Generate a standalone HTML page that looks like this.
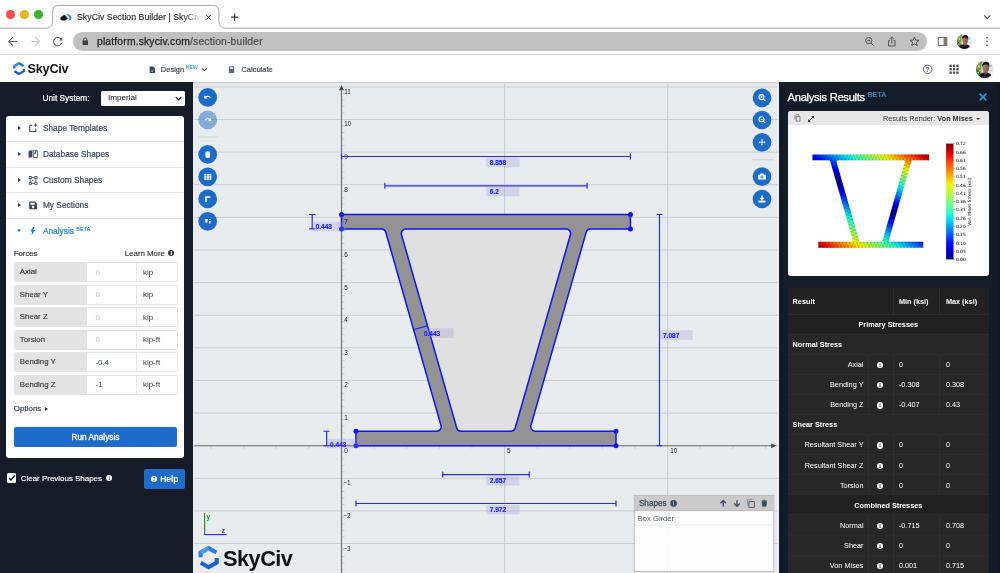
<!DOCTYPE html>
<html lang="en"><head><meta charset="utf-8"><title>SkyCiv Section Builder | SkyCiv</title>
<style>
*{box-sizing:border-box;margin:0;padding:0}
html,body{width:1000px;height:573px;overflow:hidden;background:#fff;font-family:"Liberation Sans",sans-serif;color:#333}
.abs{position:absolute}
#chrome,#apphdr,#side,#right,#cv{will-change:transform}
#chrome{position:absolute;left:0;top:0;width:1000px;height:55px;background:#fff}
#apphdr{position:absolute;left:0;top:55px;width:1000px;height:28px;background:#fff}
#side{position:absolute;left:0;top:83px;width:193px;height:490px;background:#151b28}
#cv{position:absolute;left:193px;top:83px;width:586px;height:490px;background:#e9ecef}
#right{position:absolute;left:779px;top:83px;width:221px;height:490px;background:#151b28}
/* chrome */
.tl{position:absolute;top:10.3px;width:8.6px;height:8.6px;border-radius:50%}
#omni{position:absolute;left:73px;top:32px;width:854px;height:19px;border-radius:9.5px;background:#c1c1c1}
#url{position:absolute;left:97px;top:35.5px;font-size:10.3px;line-height:12px;color:#4a4a4a;white-space:nowrap;letter-spacing:0.18px;-webkit-text-stroke:0.2px #4a4a4a}
#url b{font-weight:normal;color:#1c1c1c;-webkit-text-stroke:0.25px #1c1c1c}
#tabtitle{position:absolute;left:77px;top:11.3px;width:124.5px;overflow:hidden;white-space:nowrap;font-size:8.8px;line-height:12px;color:#2b2b2b;-webkit-text-stroke:0.15px #2b2b2b;-webkit-mask-image:linear-gradient(90deg,#000 85%,transparent 100%);mask-image:linear-gradient(90deg,#000 85%,transparent 100%)}
/* header */
.hnav{position:absolute;top:8.7px;font-size:7.5px;line-height:12px;color:#3f4a59;white-space:nowrap;-webkit-text-stroke:0.2px #3f4a59}
/* sidebar */
#unitlbl{position:absolute;left:42.5px;top:9px;font-size:8.3px;line-height:12px;color:#fff;white-space:nowrap;-webkit-text-stroke:0.2px #fff}
#unitsel{position:absolute;left:101px;top:8px;width:83.5px;height:14.5px;background:#fff;border-radius:1.5px;font-size:8.1px;line-height:14.5px;color:#000;padding-left:7px}
#card{position:absolute;left:6px;top:33px;width:178px;height:342px;background:#fff;border-radius:3px}
.mrow{position:absolute;left:-1px;width:178px;height:25.5px;border-top:1px solid #e4e6e9;font-size:8.35px;-webkit-text-stroke:0.2px;line-height:12px;color:#3d4a59;white-space:nowrap}
.mrow .tx{position:absolute;left:36.9px;top:5.9px}
.mrow svg{left:1px !important}
.mrow .car{position:absolute;left:11.7px;top:10px;width:0;height:0;border-left:3px solid #2f3a47;border-top:2.4px solid transparent;border-bottom:2.4px solid transparent}
.frow{position:absolute;left:7px;width:163.5px;height:20px;border:1px solid #e3e6e9;border-radius:2px;font-size:7.85px;line-height:12px;color:#333;overflow:hidden;background:#fff}
.frow .l{position:absolute;left:0;top:0;width:72.3px;height:20px;background:#e3e3e3;padding:3.2px 0 0 4.8px;color:#3a3a3a;-webkit-text-stroke:0.15px}
.frow .i{position:absolute;left:72.3px;top:0;width:49.5px;height:20px;padding:3.5px 0 0 8.1px;border-right:1px solid #e3e6e9;color:#b9bec4;font-size:7.9px}
.frow .i.v{color:#3a4450}
.frow .u{position:absolute;left:121.8px;top:0;padding:3.4px 0 0 6.3px;color:#333}
sup.b{-webkit-text-stroke:0.2px #2a9bd7;font-size:5.4px;vertical-align:baseline;position:relative;top:-3.2px;color:#2a9bd7;letter-spacing:.1px}
/* right */
#rt{position:absolute;left:8.6px;top:7.4px;font-size:11.2px;line-height:14px;color:#fff;white-space:nowrap;letter-spacing:-0.3px;-webkit-text-stroke:0.25px #fff}
#rcard{position:absolute;left:9px;top:28px;width:200.5px;height:164.6px;background:#fff;border-radius:3px;overflow:hidden}
#rhead{position:absolute;left:0;top:0;width:100%;height:14px;background:#e7e7e7}
table{position:absolute;left:9px;top:205px;width:200.6px;border-collapse:collapse;font-size:7.3px;color:#fff;table-layout:fixed}
td,th{height:20.08px;padding:0.5px 4.6px 0;border-top:1px solid #2c2c2c;text-align:left;white-space:nowrap;font-weight:normal;background:#272727;vertical-align:middle}
th{height:26.2px;font-weight:bold;background:#222;border-top:none}
td.c{text-align:center;font-weight:bold;background:#212121}
td.s{font-weight:bold}
td.r{text-align:right}
td.bl,th.bl{border-left:1px solid #2e2e2e}
td.ic{text-align:center;padding:0.6px 2px 0 0}
td.mn,th.mn{padding-left:5.2px}
td.mx,th.mx{padding-left:6.1px}
.inf{display:inline-block;width:6.2px;height:6.2px;border-radius:50%;background:#fff;color:#222;font-size:5.4px;line-height:6.4px;font-weight:bold;text-align:center;font-family:"Liberation Serif",serif;vertical-align:middle}
</style></head><body>
<div id="chrome">
<svg class="abs" style="left:0;top:0" width="1000" height="55" viewBox="0 0 1000 55">
<path d="M0 28.2 L45 28.2 Q52.6 28.2 52.6 21.5 L52.6 11.5 Q52.6 5.4 59 5.4 L212.5 5.4 Q218.9 5.4 218.9 11.5 L218.9 21.5 Q218.9 28.2 226.5 28.2 L1000 28.2" fill="none" stroke="#9c9c9c" stroke-width="0.9"/>
<line x1="0" y1="54.5" x2="1000" y2="54.5" stroke="#d6d6d6" stroke-width="1"/>
<!-- favicon -->
<g>
<path d="M60.4 18.6 C60.4 16.9 61.7 16.1 62.7 16.3 C63.1 14.9 64.7 14.5 65.4 15.6 L67.9 18.4 C66.6 19 66.2 20.6 64.2 20.6 L62.1 20.6 C61.1 20.6 60.4 19.7 60.4 18.6 Z" fill="#17181b"/>
<path d="M66.3 14.5 C68.5 13.9 70.6 14.8 71.4 17 C72 18.9 70.7 20.4 68.5 20.8 C69.6 19.4 69.8 18.1 68.9 16.8 C68.3 15.8 67.4 15 66.3 14.5 Z" fill="#2585cc"/>
</g>
<!-- close x -->
<path d="M206.1 14.9 L210.9 19.7 M210.9 14.9 L206.1 19.7" stroke="#333" stroke-width="1" fill="none"/>
<!-- plus -->
<path d="M231 17.1 L238.2 17.1 M234.6 13.5 L234.6 20.7" stroke="#333" stroke-width="1.1" fill="none"/>
<!-- chevron right top -->
<path d="M984.2 15.3 L987.2 18.6 L990.2 15.3" stroke="#444" stroke-width="1.1" fill="none"/>
<!-- back -->
<path d="M17.2 41.4 L8.8 41.4 M12.9 37.2 L8.7 41.4 L12.9 45.6" stroke="#5c5c5c" stroke-width="1.05" fill="none"/>
<!-- forward -->
<path d="M31 41.4 L39.4 41.4 M35.3 37.2 L39.5 41.4 L35.3 45.6" stroke="#c6c6c6" stroke-width="1.05" fill="none"/>
<!-- reload -->
<path d="M61.2 39.6 A4.1 4.1 0 1 0 61.6 42.8" stroke="#5c5c5c" stroke-width="1.05" fill="none"/>
<path d="M62.3 37.2 L62.3 40.6 L58.9 40.6 Z" fill="#5c5c5c"/>
</svg>
<div class="tl" style="left:6.4px;background:#fc4a48"></div>
<div class="tl" style="left:20.4px;background:#e9b220"></div>
<div class="tl" style="left:34.2px;background:#38b62b"></div>
<div id="tabtitle">SkyCiv Section Builder | SkyCiv Platform</div>
<div id="omni"></div>
<svg class="abs" style="left:0;top:28px" width="1000" height="27" viewBox="0 28 1000 27">
<!-- lock -->
<rect x="82.6" y="40.6" width="5.4" height="4.4" rx="0.6" fill="#3c3c3c"/>
<path d="M83.7 40.8 L83.7 39.6 A1.6 1.6 0 0 1 86.9 39.6 L86.9 40.8" stroke="#3c3c3c" stroke-width="0.9" fill="none"/>
<!-- zoom out -->
<circle cx="868.8" cy="40.6" r="3.1" stroke="#4a4a4a" stroke-width="0.9" fill="none"/>
<path d="M871 43 L873.8 45.8 M867.3 40.6 L870.3 40.6" stroke="#4a4a4a" stroke-width="0.9" fill="none"/>
<!-- share -->
<path d="M889.9 40.3 L888.6 40.3 L888.6 46 L895 46 L895 40.3 L893.7 40.3 M891.8 43.4 L891.8 37.2 M889.9 38.8 L891.8 36.9 L893.7 38.8" stroke="#4a4a4a" stroke-width="0.9" fill="none"/>
<!-- star -->
<path d="M914.5 37 L915.7 40.1 L919 40.3 L916.4 42.4 L917.3 45.6 L914.5 43.8 L911.7 45.6 L912.6 42.4 L910 40.3 L913.3 40.1 Z" stroke="#4a4a4a" stroke-width="0.9" fill="none" stroke-linejoin="round"/>
<!-- side panel -->
<rect x="938.2" y="37.4" width="8.6" height="8" stroke="#5a5a5a" stroke-width="0.9" fill="none"/>
<rect x="943.6" y="37.4" width="3.2" height="8" fill="#7a7a7a"/>
<!-- dots -->
<circle cx="987" cy="37.6" r="0.85" fill="#555"/><circle cx="987" cy="41.4" r="0.85" fill="#555"/><circle cx="987" cy="45.2" r="0.85" fill="#555"/>
<!-- avatar -->
<defs><clipPath id="av1"><circle cx="0" cy="0" r="10"/></clipPath></defs><g transform="translate(964.40 41.50) scale(0.760)"><g clip-path="url(#av1)"><rect x="-10" y="-10" width="20" height="20" fill="#e6ecf1"/><path d="M-10 -10 L-2 -10 C-4 -6 -4.5 0 -3 10 L-10 10 Z" fill="#7c9a52"/><path d="M-10 0 C-7 -1 -5 2 -4 10 L-10 10 Z" fill="#4f7032"/><circle cx="-6.8" cy="-3.2" r="1.1" fill="#e9e2a8"/><circle cx="-5.6" cy="1.6" r="0.9" fill="#d9c65e"/><circle cx="-7.6" cy="3.6" r="0.8" fill="#dfe6c8"/><circle cx="6.6" cy="-3.5" r="1.2" fill="#9fb9d8"/><circle cx="7.2" cy="1.5" r="1" fill="#b5c8de"/><path d="M-8 10 C-7 5 -3.5 3.6 0.6 3.6 C4.6 3.6 7.6 5.2 8.6 10 Z" fill="#17171d"/><path d="M-1.4 1.5 L3 1.5 L3.2 4.4 C1.6 5.6 0 5.6 -1.4 4.4 Z" fill="#7b5946"/><ellipse cx="0.9" cy="-1.6" rx="3.7" ry="4.7" fill="#9e7761"/><path d="M0.9 -6.3 C3.4 -6.3 4.6 -4 4.6 -1.6 C4.6 1 3.2 3.1 0.9 3.1 Z" fill="#8a6552"/><path d="M-3.1 -2.2 C-4 -7.6 -0.5 -8.6 1.4 -8.6 C4.8 -8.6 5.8 -5.4 4.7 -1.9 C4.4 -4.3 3 -5.4 0.8 -5.3 C-1.4 -5.3 -2.7 -4.2 -3.1 -2.2 Z" fill="#18161a"/></g></g>
</svg>
<div id="url"><b>platform.skyciv.com</b>/section-builder</div>
</div>
<div class="abs" style="left:0;top:82px;width:1000px;height:1px;background:linear-gradient(90deg,#151b28 0,#151b28 193px,#cfd2d5 193px,#cfd2d5 779px,#151b28 779px);z-index:5"></div>
<div class="abs" style="left:193px;top:83px;width:586px;height:1px;background:#dde0e3;z-index:5"></div>
<div id="apphdr">
<svg class="abs" style="left:0;top:0" width="1000" height="28" viewBox="0 55 1000 28">
<!-- logo icon -->
<g fill="none" stroke-width="2.3" stroke-linejoin="miter">
<path d="M14.3 68.5 L14.3 66.1 L19 63.3 L23.6 66.0" stroke="#1c68de"/>
<path d="M14.3 66.1 L19 63.3" stroke="#3d8ff5"/>
<path d="M23.8 68.9 L23.8 71.2 L19 74 L14.4 71.3" stroke="#1757cf"/>
</g>
<!-- design icon -->
<path d="M149.6 66.4 L153.2 66.4 L155.1 68.3 L155.1 73 L149.6 73 Z" fill="#3d4856"/>
<path d="M151 70.6 L152 71.6 L153.8 69.6" stroke="#fff" stroke-width="0.7" fill="none"/>
<!-- chevron -->
<path d="M202 68.4 L204.4 70.6 L206.8 68.4" stroke="#3d4856" stroke-width="1.1" fill="none"/>
<!-- calc icon -->
<rect x="228.9" y="66.2" width="5.3" height="6.8" rx="0.7" fill="#5b6673"/>
<rect x="229.9" y="67.2" width="3.3" height="1.5" fill="#fff"/>
<!-- help -->
<circle cx="927.7" cy="69.3" r="4.2" stroke="#4a5868" stroke-width="0.9" fill="none"/>
<!-- grid -->
<g fill="#4a4a4a">
<rect x="949.5" y="64.7" width="2.3" height="2.3"/><rect x="952.9" y="64.7" width="2.3" height="2.3"/><rect x="956.3" y="64.7" width="2.3" height="2.3"/>
<rect x="949.5" y="68.1" width="2.3" height="2.3"/><rect x="952.9" y="68.1" width="2.3" height="2.3"/><rect x="956.3" y="68.1" width="2.3" height="2.3"/>
<rect x="949.5" y="71.5" width="2.3" height="2.3"/><rect x="952.9" y="71.5" width="2.3" height="2.3"/><rect x="956.3" y="71.5" width="2.3" height="2.3"/>
</g>
<!-- avatar -->
<defs><clipPath id="av2"><circle cx="0" cy="0" r="10"/></clipPath></defs><g transform="translate(984.90 69.30) scale(0.890)"><g clip-path="url(#av2)"><rect x="-10" y="-10" width="20" height="20" fill="#e6ecf1"/><path d="M-10 -10 L-2 -10 C-4 -6 -4.5 0 -3 10 L-10 10 Z" fill="#7c9a52"/><path d="M-10 0 C-7 -1 -5 2 -4 10 L-10 10 Z" fill="#4f7032"/><circle cx="-6.8" cy="-3.2" r="1.1" fill="#e9e2a8"/><circle cx="-5.6" cy="1.6" r="0.9" fill="#d9c65e"/><circle cx="-7.6" cy="3.6" r="0.8" fill="#dfe6c8"/><circle cx="6.6" cy="-3.5" r="1.2" fill="#9fb9d8"/><circle cx="7.2" cy="1.5" r="1" fill="#b5c8de"/><path d="M-8 10 C-7 5 -3.5 3.6 0.6 3.6 C4.6 3.6 7.6 5.2 8.6 10 Z" fill="#17171d"/><path d="M-1.4 1.5 L3 1.5 L3.2 4.4 C1.6 5.6 0 5.6 -1.4 4.4 Z" fill="#7b5946"/><ellipse cx="0.9" cy="-1.6" rx="3.7" ry="4.7" fill="#9e7761"/><path d="M0.9 -6.3 C3.4 -6.3 4.6 -4 4.6 -1.6 C4.6 1 3.2 3.1 0.9 3.1 Z" fill="#8a6552"/><path d="M-3.1 -2.2 C-4 -7.6 -0.5 -8.6 1.4 -8.6 C4.8 -8.6 5.8 -5.4 4.7 -1.9 C4.4 -4.3 3 -5.4 0.8 -5.3 C-1.4 -5.3 -2.7 -4.2 -3.1 -2.2 Z" fill="#18161a"/></g></g>
</svg>
<div class="abs" style="left:27.6px;top:7.2px;font-size:12.7px;line-height:15px;font-weight:bold;color:#0e0e10;letter-spacing:-0.25px">SkyCiv</div>
<div class="hnav" style="left:160.8px">Design<sup class="b" style="font-size:5px;top:-3px;margin-left:1.6px;-webkit-text-stroke:0.1px #2a9bd7">NEW</sup></div>
<div class="hnav" style="left:241.4px">Calculate</div>
<div class="abs" style="left:925.6px;top:9.6px;font-size:6.6px;line-height:9px;font-weight:bold;color:#4a5868">?</div>
</div>
<!--SD--><div id="side">
<div id="unitlbl">Unit System:</div>
<div id="unitsel">Imperial<svg class="abs" style="right:2.8px;top:4.6px" width="7" height="6" viewBox="0 0 7 6"><path d="M0.8 1.2 L3.5 4 L6.2 1.2" stroke="#111" stroke-width="1.15" fill="none"/></svg></div>
<div id="card"><div class="abs" style="left:1px;top:0;width:177px;height:342px">
<div class="mrow" style="top:0px;border-top:none"><span class="car"></span><svg class="abs" style="left:0;top:0" width="40" height="25" viewBox="0 0 40 25"><path d="M25.3 9.2 H22.7 V15.4 H28.9 V12.6" stroke="#3d4a59" stroke-width="1.05" fill="none" stroke-linejoin="round"/><path d="M28.6 7.4 V11 M26.8 9.2 H30.4" stroke="#3d4a59" stroke-width="0.95" fill="none"/></svg><span class="tx">Shape Templates</span></div>
<div class="mrow" style="top:25.3px"><span class="car"></span><svg class="abs" style="left:0;top:0" width="40" height="25" viewBox="0 0 40 25"><path d="M21.6 8.8 L25.3 8.3 L25.3 15.2 L21.6 15.7 Z" fill="#3d4a59"/><path d="M26.3 8.5 L27.6 8.6 M29.6 8.9 L30.6 9 L30.6 15.7 L26.3 15.2 L26.3 8.4" stroke="#3d4a59" stroke-width="0.9" fill="none"/><path d="M29.2 7.6 L27.8 12.3" stroke="#3d4a59" stroke-width="1.3"/></svg><span class="tx">Database Shapes</span></div>
<div class="mrow" style="top:50.8px"><span class="car"></span><svg class="abs" style="left:0;top:0" width="40" height="25" viewBox="0 0 40 25"><path d="M23.3 9.6 H28.9 V15.4 H23.3 Z" stroke="#3d4a59" stroke-width="0.85" fill="none"/><g fill="#fff" stroke="#3d4a59" stroke-width="0.8"><rect x="22.2" y="8.5" width="2.1" height="2.1"/><rect x="27.9" y="8.5" width="2.1" height="2.1"/><rect x="22.2" y="14.4" width="2.1" height="2.1"/><rect x="27.9" y="14.4" width="2.1" height="2.1"/></g><path d="M24.6 13.4 Q26.1 10.4 27.6 13.4" stroke="#3d4a59" stroke-width="0.8" fill="none"/></svg><span class="tx">Custom Shapes</span></div>
<div class="mrow" style="top:76.3px"><span class="car"></span><svg class="abs" style="left:0;top:0" width="40" height="25" viewBox="0 0 40 25"><path d="M22.2 9.4 Q22.2 8.6 23 8.6 L28 8.6 L30.1 10.7 L30.1 15.5 Q30.1 16.3 29.3 16.3 L23 16.3 Q22.2 16.3 22.2 15.5 Z" fill="#3d4a59"/><rect x="23.5" y="9.8" width="4.2" height="2" fill="#fff"/><circle cx="26.1" cy="13.9" r="1.25" fill="#fff"/></svg><span class="tx">My Sections</span></div>
<div class="mrow" style="top:101.8px;color:#1b7fd0"><svg class="abs" style="left:0;top:0" width="40" height="25" viewBox="0 0 40 25"><path d="M9.9 10.6 H14.3 L12.1 13 Z" fill="#1b7fd0"/><path d="M26.2 7.8 L23.4 12.6 H25.3 L24.3 16.4 L28.4 10.9 H26.3 L27.6 7.8 Z" fill="#1b7fd0"/></svg><span class="tx">Analysis <sup class="b">BETA</sup></span></div>
<div class="abs" style="left:6.8px;top:131.7px;font-size:7.75px;line-height:12px;color:#333;-webkit-text-stroke:0.2px">Forces</div>
<div class="abs" style="left:117.8px;top:131.7px;font-size:7.85px;line-height:12px;color:#333;white-space:nowrap;-webkit-text-stroke:0.15px">Learn More <span class="inf" style="background:#333;color:#fff;position:relative;top:-0.6px;margin-left:1px">i</span></div>
<div class="frow" style="top:146.2px"><div class="l">Axial</div><div class="i">0</div><div class="u">kip</div></div>
<div class="frow" style="top:168.7px"><div class="l">Shear Y</div><div class="i">0</div><div class="u">kip</div></div>
<div class="frow" style="top:191.2px"><div class="l">Shear Z</div><div class="i">0</div><div class="u">kip</div></div>
<div class="frow" style="top:213.7px"><div class="l">Torsion</div><div class="i">0</div><div class="u">kip-ft</div></div>
<div class="frow" style="top:236.2px"><div class="l">Bending Y</div><div class="i v">-0.4</div><div class="u">kip-ft</div></div>
<div class="frow" style="top:258.7px"><div class="l">Bending Z</div><div class="i v">-1</div><div class="u">kip-ft</div></div>
<div class="abs" style="left:6.8px;top:287.2px;font-size:8px;line-height:12px;color:#333d4a;white-space:nowrap;-webkit-text-stroke:0.2px">Options <span style="display:inline-block;width:0;height:0;border-left:3.1px solid #333;border-top:2.7px solid transparent;border-bottom:2.7px solid transparent;position:relative;top:0px;margin-left:1.2px"></span></div>
<div class="abs" style="left:6.7px;top:311px;width:163.5px;height:20px;background:#1d6cc9;border-radius:2px;color:#fff;font-size:8.3px;line-height:20px;text-align:center;-webkit-text-stroke:0.3px #fff">Run Analysis</div>
</div></div>
<div class="abs" style="left:6.6px;top:390.3px;width:9.7px;height:9.7px;background:#fff;border-radius:1.5px"><svg class="abs" style="left:0;top:0" width="9.7" height="9.7" viewBox="0 0 9.7 9.7"><path d="M2 5 L4 7 L7.8 2.6" stroke="#111" stroke-width="1.5" fill="none"/></svg></div>
<div class="abs" style="left:20.8px;top:389.9px;font-size:7.95px;line-height:12px;color:#fff;white-space:nowrap;-webkit-text-stroke:0.15px #fff">Clear Previous Shapes <span class="inf" style="position:relative;top:-0.6px;margin-left:2px;color:#151b28">i</span></div>
<div class="abs" style="left:144px;top:386px;width:40.6px;height:19.8px;background:#1d6cc9;border-radius:2px;color:#fff;font-size:8.4px;line-height:21px;font-weight:bold;white-space:nowrap;padding-left:7px"><span class="inf" style="position:relative;top:-0.6px;margin-right:3px;color:#1d6cc9;font-family:'Liberation Sans',sans-serif;font-size:5px">?</span>Help</div>
</div><!--/SD-->
<!--CV--><svg id="cv" width="586" height="490" viewBox="193 83 586 490" font-family="Liberation Sans, sans-serif">
<rect x="193" y="83" width="586" height="490" fill="#e9ecef"/>
<path d="M193 543.56 H779 M193 510.94 H779 M193 478.32 H779 M193 445.70 H779 M193 413.08 H779 M193 380.46 H779 M193 347.84 H779 M193 315.22 H779 M193 282.60 H779 M193 249.98 H779 M193 217.36 H779 M193 184.74 H779 M193 152.12 H779 M193 119.50 H779 M193 86.88 H779 M504.60 83 V573 M667.70 83 V573" stroke="#cbcdcf" stroke-width="1" fill="none"/>
<path d="M341.50 569.66 h3.2 M341.50 563.13 h3.2 M341.50 556.61 h3.2 M341.50 550.08 h3.2 M341.50 537.04 h3.2 M341.50 530.51 h3.2 M341.50 523.99 h3.2 M341.50 517.46 h3.2 M341.50 504.42 h3.2 M341.50 497.89 h3.2 M341.50 491.37 h3.2 M341.50 484.84 h3.2 M341.50 471.80 h3.2 M341.50 465.27 h3.2 M341.50 458.75 h3.2 M341.50 452.22 h3.2 M341.50 439.18 h3.2 M341.50 432.65 h3.2 M341.50 426.13 h3.2 M341.50 419.60 h3.2 M341.50 406.56 h3.2 M341.50 400.03 h3.2 M341.50 393.51 h3.2 M341.50 386.98 h3.2 M341.50 373.94 h3.2 M341.50 367.41 h3.2 M341.50 360.89 h3.2 M341.50 354.36 h3.2 M341.50 341.32 h3.2 M341.50 334.79 h3.2 M341.50 328.27 h3.2 M341.50 321.74 h3.2 M341.50 308.70 h3.2 M341.50 302.17 h3.2 M341.50 295.65 h3.2 M341.50 289.12 h3.2 M341.50 276.08 h3.2 M341.50 269.55 h3.2 M341.50 263.03 h3.2 M341.50 256.50 h3.2 M341.50 243.46 h3.2 M341.50 236.93 h3.2 M341.50 230.41 h3.2 M341.50 223.88 h3.2 M341.50 210.84 h3.2 M341.50 204.31 h3.2 M341.50 197.79 h3.2 M341.50 191.26 h3.2 M341.50 178.22 h3.2 M341.50 171.69 h3.2 M341.50 165.17 h3.2 M341.50 158.64 h3.2 M341.50 145.60 h3.2 M341.50 139.07 h3.2 M341.50 132.55 h3.2 M341.50 126.02 h3.2 M341.50 112.98 h3.2 M341.50 106.45 h3.2 M341.50 99.93 h3.2 M341.50 93.40 h3.2 M211.02 445.70 v3.2 M243.64 445.70 v3.2 M276.26 445.70 v3.2 M308.88 445.70 v3.2 M374.12 445.70 v3.2 M406.74 445.70 v3.2 M439.36 445.70 v3.2 M471.98 445.70 v3.2 M537.22 445.70 v3.2 M569.84 445.70 v3.2 M602.46 445.70 v3.2 M635.08 445.70 v3.2 M700.32 445.70 v3.2 M732.94 445.70 v3.2 M765.56 445.70 v3.2" stroke="#c4c6c8" stroke-width="0.8" fill="none"/>
<path d="M341.50 573 V88 M193 445.70 H773" stroke="#727272" stroke-width="1.15" fill="none"/>
<path d="M341.50 85.3 l-2.55 5 h5.1 Z M776.4 445.70 l-5.2 -2.55 v5.1 Z" fill="#484848"/>
<path d="M341.50 214.52 L630.45 214.52 L630.45 228.97 L590.49 228.97 A4.50 4.50 0 0 0 586.16 232.24 L530.95 425.51 A4.50 4.50 0 0 0 535.28 431.25 L616.00 431.25 L616.00 445.70 L355.95 445.70 L355.95 431.25 L436.67 431.25 A4.50 4.50 0 0 0 441.00 425.51 L385.78 232.24 A4.50 4.50 0 0 0 381.46 228.97 L341.50 228.97 Z" fill="#939393" stroke="#1212ff" stroke-width="1.5" stroke-linejoin="round"/>
<path d="M401.52 234.71 A4.50 4.50 0 0 1 405.85 228.97 L566.10 228.97 A4.50 4.50 0 0 1 570.43 234.71 L515.21 427.99 A4.50 4.50 0 0 1 510.89 431.25 L461.06 431.25 A4.50 4.50 0 0 1 456.73 427.99 Z" fill="#e0e0e0" stroke="#1212ff" stroke-width="1.5" stroke-linejoin="round"/>
<g font-size="6.4" fill="#1a1a1a"><text x="343.4" y="550.5">−3</text><text x="343.4" y="517.8">−2</text><text x="343.4" y="485.2">−1</text><text x="344.2" y="420.0">1</text><text x="344.2" y="387.4">2</text><text x="344.2" y="354.7">3</text><text x="344.2" y="322.1">4</text><text x="344.2" y="289.5">5</text><text x="344.2" y="256.9">6</text><text x="344.2" y="224.3">7</text><text x="344.2" y="191.6">8</text><text x="344.2" y="159.0">9</text><text x="344.2" y="126.4">10</text><text x="344.2" y="93.8">11</text><text x="344.2" y="452.6">0</text><text x="507.1" y="452.6">5</text><text x="670.2" y="452.6">10</text></g>
<g fill="#1414ff"><circle cx="341.50" cy="214.52" r="2.5"/><circle cx="341.50" cy="228.97" r="2.5"/><circle cx="630.45" cy="214.52" r="2.5"/><circle cx="630.45" cy="228.97" r="2.5"/><circle cx="355.95" cy="431.25" r="2.5"/><circle cx="355.95" cy="445.70" r="2.5"/><circle cx="616.00" cy="431.25" r="2.5"/><circle cx="616.00" cy="445.70" r="2.5"/></g>
<path d="M341.50 156.50 H630.45 M341.50 153.50 v6 M630.45 153.50 v6 M384.85 185.80 H587.10 M384.85 182.80 v6 M587.10 182.80 v6 M442.64 474.60 H529.31 M442.64 471.60 v6 M529.31 471.60 v6 M355.95 503.50 H616.00 M355.95 500.50 v6 M616.00 500.50 v6 M659.50 214.52 V445.70 M656.60 214.52 h5.8 M656.60 445.70 h5.8 M312.20 214.52 V228.97 M309.10 214.52 h6.2 M309.10 228.97 h6.2 M326.60 431.25 V445.70 M323.50 431.25 h6.2 M323.50 445.70 h6.2 M414.4 329.4 L427.3 325.9" stroke="#2a2aff" stroke-width="1.2" fill="none"/>
<g fill="#8c8cd8" fill-opacity="0.25"><rect x="486.3" y="157.6" width="33.2" height="9.6"/><rect x="486.3" y="186.7" width="33.2" height="9.6"/><rect x="486.3" y="475.9" width="33.2" height="9.6"/><rect x="486.3" y="504.9" width="33.2" height="9.6"/><rect x="659.5" y="330.2" width="33.2" height="9.6"/><rect x="312.2" y="221.6" width="33.2" height="9.6"/><rect x="326.6" y="438.8" width="33.2" height="9.6"/><rect x="420.4" y="328.3" width="33.2" height="9.6"/></g>
<g font-size="6.5" font-weight="bold" fill="#1c1cff" stroke="#1c1cff" stroke-width="0.15"><text x="489.8" y="164.9">8.858</text><text x="489.8" y="194.0">6.2</text><text x="489.8" y="483.2">2.657</text><text x="489.8" y="512.2">7.972</text><text x="663.0" y="337.5">7.087</text><text x="315.7" y="229.4">0.443</text><text x="330.1" y="446.6">0.443</text><text x="423.9" y="336.1">0.443</text></g>
<path d="M204.6 513 V535" stroke="#1e8a1e" stroke-width="1.1"/><path d="M204.1 534.6 H226.6" stroke="#2222ff" stroke-width="1.1"/>
<text x="206.6" y="519.4" font-size="6.4" font-weight="bold" fill="#1e8a1e">y</text><text x="221.8" y="532.6" font-size="6.4" font-weight="bold" fill="#2222ff">z</text>
<g fill="none" stroke-width="4.1"><path d="M200.6 557.3 L200.6 552.6 L208.6 548.1 L216.4 552.5" stroke="#2a7be4"/><path d="M200.6 552.6 L208.6 548.1" stroke="#4a9af5"/><path d="M216.7 558 L216.7 562.6 L208.6 567.2 L200.8 562.8" stroke="#1d63d4"/></g>
<text x="223" y="565.6" font-size="21.8" font-weight="bold" fill="#121214" letter-spacing="-0.55">SkyCiv</text>
<rect x="778" y="83" width="1" height="490" fill="#f5f6f7"/><rect x="193" y="83" width="1" height="490" fill="#eef0f2"/>
<circle cx="207.7" cy="97.4" r="9.35" fill="#1d6cc9" fill-opacity="1"/><circle cx="207.7" cy="119.9" r="9.35" fill="#1d6cc9" fill-opacity="0.5"/><circle cx="207.7" cy="154.4" r="9.35" fill="#1d6cc9" fill-opacity="1"/><circle cx="207.7" cy="176.8" r="9.35" fill="#1d6cc9" fill-opacity="1"/><circle cx="207.7" cy="198.9" r="9.35" fill="#1d6cc9" fill-opacity="1"/><circle cx="207.7" cy="221.3" r="9.35" fill="#1d6cc9" fill-opacity="1"/><circle cx="762.0" cy="97.8" r="9.35" fill="#1d6cc9" fill-opacity="1"/><circle cx="762.0" cy="120.0" r="9.35" fill="#1d6cc9" fill-opacity="1"/><circle cx="762.0" cy="142.3" r="9.35" fill="#1d6cc9" fill-opacity="1"/><circle cx="762.0" cy="176.6" r="9.35" fill="#1d6cc9" fill-opacity="1"/><circle cx="762.0" cy="199.0" r="9.35" fill="#1d6cc9" fill-opacity="1"/><path d="M197.9 137 H218.5 M751.8 159.8 H773" stroke="#cfd1d3" stroke-width="1"/><path d="M205.3 97.2 C206.6 95.8 209 95.9 210.2 97.6" stroke="#fff" fill="none" stroke-width="1.2"/><path d="M204.3 95.3 L204.3 98.4 L207.4 98.4 Z" fill="#fff"/><path d="M210.1 119.7 C208.8 118.3 206.4 118.4 205.2 120.1" stroke="#fff" fill="none" stroke-width="1.2"/><path d="M211.1 117.8 L211.1 120.9 L208 120.9 Z" fill="#fff"/><path d="M205.7 152.9 H209.7 L209.4 157.4 H206 Z M205.4 152.2 H210 M206.9 151.6 H208.5" stroke="#fff" stroke-width="0.8" fill="#fff"/><g fill="#fff"><rect x="204.20" y="173.90" width="2.1" height="1.7"/><rect x="206.75" y="173.90" width="2.1" height="1.7"/><rect x="209.30" y="173.90" width="2.1" height="1.7"/><rect x="204.20" y="176.05" width="2.1" height="1.7"/><rect x="206.75" y="176.05" width="2.1" height="1.7"/><rect x="209.30" y="176.05" width="2.1" height="1.7"/><rect x="204.20" y="178.20" width="2.1" height="1.7"/><rect x="206.75" y="178.20" width="2.1" height="1.7"/><rect x="209.30" y="178.20" width="2.1" height="1.7"/></g><path d="M206 201.9 V196.9 H210.4" stroke="#fff" fill="none" stroke-width="1.5"/><path d="M205.2 219 h2.4 v3 q-1.2 1.4 -2.4 0 Z M209.1 218.9 h1.4 v1.4 h-1.4 Z M209.1 221 h1.4 v2.5 h-1.4 Z" fill="#fff"/><circle cx="761.5" cy="97.1" r="2.5" stroke="#fff" fill="none" stroke-width="1.1"/><path d="M763.3 98.9 L765.3 100.9" stroke="#fff" fill="none" stroke-width="1.3"/><path d="M760.3 97.1 h2.4" stroke="#fff" fill="none" stroke-width="0.8"/><path d="M761.5 95.9 v2.4" stroke="#fff" fill="none" stroke-width="0.8"/><circle cx="761.5" cy="119.3" r="2.5" stroke="#fff" fill="none" stroke-width="1.1"/><path d="M763.3 121.1 L765.3 123.1" stroke="#fff" fill="none" stroke-width="1.3"/><path d="M760.3 119.3 h2.4" stroke="#fff" fill="none" stroke-width="0.8"/><path d="M762 139.6 V145 M759.3 142.3 H764.7" stroke="#fff" fill="none" stroke-width="0.7"/><path d="M762 138.9 l1.1 1.3 h-2.2 Z M762 145.7 l1.1 -1.3 h-2.2 Z M758.6 142.3 l1.3 -1.1 v2.2 Z M765.4 142.3 l-1.3 -1.1 v2.2 Z" fill="#fff"/><circle cx="762" cy="142.3" r="0.9" fill="#fff"/><path d="M758.2 174.7 h1.8 l0.7 -1.1 h2.6 l0.7 1.1 h1.8 v4.9 h-7.6 Z" fill="#fff"/><circle cx="762" cy="177" r="1.5" fill="#1d6cc9"/><circle cx="762" cy="177" r="0.7" fill="#fff"/><path d="M761.1 195.6 h1.8 v2.3 h1.5 l-2.4 2.4 l-2.4 -2.4 h1.5 Z" fill="#fff"/><path d="M758.5 200.6 h7 v1.9 h-7 Z" fill="#fff"/>
<rect x="634.3" y="495.4" width="139.5" height="76" fill="#fdfdfd" fill-opacity="0.93" stroke="#b9b9b9" stroke-width="1"/><rect x="634.8" y="495.9" width="138.5" height="14.7" fill="#cbcbcb"/><path d="M634.3 510.6 H773.8" stroke="#b0b0b0" stroke-width="0.8"/><path d="M635 525 H773" stroke="#ececec" stroke-width="1"/><text x="638.9" y="506.4" font-size="8.2" fill="#3c4858" stroke="#3c4858" stroke-width="0.25">Shapes</text><circle cx="673.6" cy="503.4" r="3.3" fill="#3c4858"/><text x="673.6" y="505.3" font-size="5.4" font-weight="bold" fill="#cbcbcb" text-anchor="middle" font-family="Liberation Serif, serif">i</text><text x="637.8" y="520.6" font-size="7.6" fill="#555b62">Box Girder</text><path d="M723.2 506.6 V500.6 M720.4 503.3 L723.2 500.4 L726 503.3" stroke="#3c4858" fill="none" stroke-width="1.3"/><path d="M737 500.2 V506.2 M734.2 503.5 L737 506.4 L739.8 503.5" stroke="#3c4858" fill="none" stroke-width="1.3"/><path d="M748.9 501.6 h5.6 v5.8 h-5.6 Z" stroke="#3c4858" fill="none" stroke-width="0.8"/><path d="M747.4 505.4 v-5.6 h5.4" stroke="#7b8590" fill="none" stroke-width="0.8"/><path d="M762.1 501.6 h4.3 l-0.35 4.6 h-3.6 Z M761.6 500.8 h5.3 M763.4 500.1 h1.7" stroke="#3c4858" stroke-width="0.75" fill="#3c4858"/>
</svg><!--/CV-->
<!--RT--><div id="right">
<div class="abs" style="right:0;top:0;width:3.4px;height:490px;background:#11161f"></div>
<div id="rt">Analysis Results <sup class="b" style="font-size:7px;top:-4.6px;letter-spacing:.2px">BETA</sup></div>
<svg class="abs" style="left:199.2px;top:9.2px" width="10" height="10" viewBox="0 0 10 10"><path d="M1.6 1.6 L8.4 8.4 M8.4 1.6 L1.6 8.4" stroke="#2a9bd7" stroke-width="1.7" fill="none"/></svg>
<div id="rcard"><div id="rhead"></div>
<svg class="abs" style="left:0;top:0" width="200.8" height="164" viewBox="788 111 200.8 164" font-family="Liberation Sans, sans-serif">
<defs><linearGradient id="sg" gradientUnits="userSpaceOnUse" x1="835.58" y1="259.37" x2="905.99" y2="140.04"><stop offset="0.0000" stop-color="#800000"/><stop offset="0.0250" stop-color="#b60000"/><stop offset="0.0500" stop-color="#f10800"/><stop offset="0.0750" stop-color="#ff3800"/><stop offset="0.1000" stop-color="#ff6800"/><stop offset="0.1250" stop-color="#ff9400"/><stop offset="0.1500" stop-color="#ffc400"/><stop offset="0.1750" stop-color="#f8f500"/><stop offset="0.2000" stop-color="#ceff29"/><stop offset="0.2250" stop-color="#a4ff53"/><stop offset="0.2500" stop-color="#7dff7a"/><stop offset="0.2750" stop-color="#53ffa4"/><stop offset="0.3000" stop-color="#29ffce"/><stop offset="0.3250" stop-color="#00e5f8"/><stop offset="0.3500" stop-color="#00b1ff"/><stop offset="0.3750" stop-color="#0081ff"/><stop offset="0.4000" stop-color="#004dff"/><stop offset="0.4250" stop-color="#0019ff"/><stop offset="0.4500" stop-color="#0000f1"/><stop offset="0.4750" stop-color="#0000b6"/><stop offset="0.5000" stop-color="#000080"/><stop offset="0.5250" stop-color="#0000b6"/><stop offset="0.5500" stop-color="#0000f1"/><stop offset="0.5750" stop-color="#0019ff"/><stop offset="0.6000" stop-color="#004dff"/><stop offset="0.6250" stop-color="#0081ff"/><stop offset="0.6500" stop-color="#00b1ff"/><stop offset="0.6750" stop-color="#00e5f8"/><stop offset="0.7000" stop-color="#29ffce"/><stop offset="0.7250" stop-color="#53ffa4"/><stop offset="0.7500" stop-color="#7dff7a"/><stop offset="0.7750" stop-color="#a4ff53"/><stop offset="0.8000" stop-color="#ceff29"/><stop offset="0.8250" stop-color="#f8f500"/><stop offset="0.8500" stop-color="#ffc400"/><stop offset="0.8750" stop-color="#ff9400"/><stop offset="0.9000" stop-color="#ff6800"/><stop offset="0.9250" stop-color="#ff3800"/><stop offset="0.9500" stop-color="#f10800"/><stop offset="0.9750" stop-color="#b60000"/><stop offset="1.0000" stop-color="#800000"/></linearGradient><linearGradient id="cbg" x1="0" y1="0" x2="0" y2="1"><stop offset="0.000" stop-color="#800000"/><stop offset="0.050" stop-color="#b60000"/><stop offset="0.100" stop-color="#f10800"/><stop offset="0.150" stop-color="#ff3800"/><stop offset="0.200" stop-color="#ff6800"/><stop offset="0.250" stop-color="#ff9400"/><stop offset="0.300" stop-color="#ffc400"/><stop offset="0.350" stop-color="#f8f500"/><stop offset="0.400" stop-color="#ceff29"/><stop offset="0.450" stop-color="#a4ff53"/><stop offset="0.500" stop-color="#7dff7a"/><stop offset="0.550" stop-color="#53ffa4"/><stop offset="0.600" stop-color="#29ffce"/><stop offset="0.650" stop-color="#00e5f8"/><stop offset="0.700" stop-color="#00b1ff"/><stop offset="0.750" stop-color="#0081ff"/><stop offset="0.800" stop-color="#004dff"/><stop offset="0.850" stop-color="#0019ff"/><stop offset="0.900" stop-color="#0000f1"/><stop offset="0.950" stop-color="#0000b6"/><stop offset="1.000" stop-color="#000080"/></linearGradient><clipPath id="gc"><path d="M812.50 154.44 L929.07 154.44 L929.07 160.26 L912.79 160.26 A1.60 1.60 0 0 0 911.25 161.43 L888.85 239.83 A1.60 1.60 0 0 0 890.39 241.87 L923.24 241.87 L923.24 247.70 L818.33 247.70 L818.33 241.87 L851.18 241.87 A1.60 1.60 0 0 0 852.72 239.83 L830.32 161.43 A1.60 1.60 0 0 0 828.78 160.26 L812.50 160.26 Z M836.64 162.30 A1.60 1.60 0 0 1 838.17 160.26 L903.40 160.26 A1.60 1.60 0 0 1 904.94 162.30 L882.54 240.71 A1.60 1.60 0 0 1 881.00 241.87 L860.57 241.87 A1.60 1.60 0 0 1 859.03 240.71 Z" clip-rule="evenodd"/></clipPath></defs>
<path d="M812.50 154.44 L929.07 154.44 L929.07 160.26 L912.79 160.26 A1.60 1.60 0 0 0 911.25 161.43 L888.85 239.83 A1.60 1.60 0 0 0 890.39 241.87 L923.24 241.87 L923.24 247.70 L818.33 247.70 L818.33 241.87 L851.18 241.87 A1.60 1.60 0 0 0 852.72 239.83 L830.32 161.43 A1.60 1.60 0 0 0 828.78 160.26 L812.50 160.26 Z M836.64 162.30 A1.60 1.60 0 0 1 838.17 160.26 L903.40 160.26 A1.60 1.60 0 0 1 904.94 162.30 L882.54 240.71 A1.60 1.60 0 0 1 881.00 241.87 L860.57 241.87 A1.60 1.60 0 0 1 859.03 240.71 Z" fill="url(#sg)" fill-rule="evenodd"/>
<g clip-path="url(#gc)"><path d="M812.50 154.44 L814.21 160.26 L815.93 154.44 L817.64 160.26 L819.36 154.44 L821.07 160.26 L822.79 154.44 L824.50 160.26 L826.21 154.44 L827.93 160.26 L829.64 154.44 L831.36 160.26 L833.07 154.44 L834.79 160.26 L836.50 154.44 L838.21 160.26 L839.93 154.44 L841.64 160.26 L843.36 154.44 L845.07 160.26 L846.79 154.44 L848.50 160.26 L850.21 154.44 L851.93 160.26 L853.64 154.44 L855.36 160.26 L857.07 154.44 L858.79 160.26 L860.50 154.44 L862.21 160.26 L863.93 154.44 L865.64 160.26 L867.36 154.44 L869.07 160.26 L870.79 154.44 L872.50 160.26 L874.21 154.44 L875.93 160.26 L877.64 154.44 L879.36 160.26 L881.07 154.44 L882.79 160.26 L884.50 154.44 L886.21 160.26 L887.93 154.44 L889.64 160.26 L891.36 154.44 L893.07 160.26 L894.79 154.44 L896.50 160.26 L898.21 154.44 L899.93 160.26 L901.64 154.44 L903.36 160.26 L905.07 154.44 L906.79 160.26 L908.50 154.44 L910.21 160.26 L911.93 154.44 L913.64 160.26 L915.36 154.44 L917.07 160.26 L918.79 154.44 L920.50 160.26 L922.21 154.44 L923.93 160.26 L925.64 154.44 L927.36 160.26 L929.07 154.44  M818.33 241.87 L820.08 247.70 L821.83 241.87 L823.58 247.70 L825.32 241.87 L827.07 247.70 L828.82 241.87 L830.57 247.70 L832.32 241.87 L834.07 247.70 L835.82 241.87 L837.56 247.70 L839.31 241.87 L841.06 247.70 L842.81 241.87 L844.56 247.70 L846.31 241.87 L848.05 247.70 L849.80 241.87 L851.55 247.70 L853.30 241.87 L855.05 247.70 L856.80 241.87 L858.55 247.70 L860.29 241.87 L862.04 247.70 L863.79 241.87 L865.54 247.70 L867.29 241.87 L869.04 247.70 L870.79 241.87 L872.53 247.70 L874.28 241.87 L876.03 247.70 L877.78 241.87 L879.53 247.70 L881.28 241.87 L883.03 247.70 L884.77 241.87 L886.52 247.70 L888.27 241.87 L890.02 247.70 L891.77 241.87 L893.52 247.70 L895.26 241.87 L897.01 247.70 L898.76 241.87 L900.51 247.70 L902.26 241.87 L904.01 247.70 L905.76 241.87 L907.50 247.70 L909.25 241.87 L911.00 247.70 L912.75 241.87 L914.50 247.70 L916.25 241.87 L918.00 247.70 L919.74 241.87 L921.49 247.70 L923.24 241.87  M829.99 160.26 L836.54 161.97 L830.96 163.67 L837.51 165.37 L831.93 167.07 L838.48 168.77 L832.90 170.47 L839.45 172.17 L833.88 173.87 L840.42 175.57 L834.85 177.27 L841.40 178.97 L835.82 180.67 L842.37 182.37 L836.79 184.07 L843.34 185.77 L837.76 187.47 L844.31 189.17 L838.73 190.87 L845.28 192.57 L839.70 194.27 L846.25 195.97 L840.67 197.67 L847.22 199.37 L841.65 201.07 L848.19 202.77 L842.62 204.47 L849.17 206.17 L843.59 207.87 L850.14 209.57 L844.56 211.27 L851.11 212.97 L845.53 214.67 L852.08 216.37 L846.50 218.07 L853.05 219.77 L847.47 221.47 L854.02 223.17 L848.45 224.87 L854.99 226.57 L849.42 228.27 L855.97 229.97 L850.39 231.67 L856.94 233.37 L851.36 235.07 L857.91 236.77 L852.33 238.47 L858.88 240.17 L853.30 241.87  M911.58 160.26 L905.03 161.97 L910.61 163.67 L904.06 165.37 L909.64 167.07 L903.09 168.77 L908.67 170.47 L902.12 172.17 L907.70 173.87 L901.15 175.57 L906.72 177.27 L900.18 178.97 L905.75 180.67 L899.20 182.37 L904.78 184.07 L898.23 185.77 L903.81 187.47 L897.26 189.17 L902.84 190.87 L896.29 192.57 L901.87 194.27 L895.32 195.97 L900.90 197.67 L894.35 199.37 L899.93 201.07 L893.38 202.77 L898.95 204.47 L892.41 206.17 L897.98 207.87 L891.43 209.57 L897.01 211.27 L890.46 212.97 L896.04 214.67 L889.49 216.37 L895.07 218.07 L888.52 219.77 L894.10 221.47 L887.55 223.17 L893.13 224.87 L886.58 226.57 L892.15 228.27 L885.61 229.97 L891.18 231.67 L884.63 233.37 L890.21 235.07 L883.66 236.77 L889.24 238.47 L882.69 240.17 L888.27 241.87 " stroke="#000" stroke-opacity="0.5" stroke-width="0.3" fill="none"/></g>
<path d="M812.50 154.44 L929.07 154.44 L929.07 160.26 L912.79 160.26 A1.60 1.60 0 0 0 911.25 161.43 L888.85 239.83 A1.60 1.60 0 0 0 890.39 241.87 L923.24 241.87 L923.24 247.70 L818.33 247.70 L818.33 241.87 L851.18 241.87 A1.60 1.60 0 0 0 852.72 239.83 L830.32 161.43 A1.60 1.60 0 0 0 828.78 160.26 L812.50 160.26 Z M836.64 162.30 A1.60 1.60 0 0 1 838.17 160.26 L903.40 160.26 A1.60 1.60 0 0 1 904.94 162.30 L882.54 240.71 A1.60 1.60 0 0 1 881.00 241.87 L860.57 241.87 A1.60 1.60 0 0 1 859.03 240.71 Z" stroke="#000" stroke-opacity="0.3" stroke-width="0.25" fill="none"/>
<rect x="946.1" y="143.6" width="7.4" height="115.8" fill="url(#cbg)"/>
<path d="M953.5 259.40 h1.3 M953.5 251.13 h1.3 M953.5 242.86 h1.3 M953.5 234.59 h1.3 M953.5 226.31 h1.3 M953.5 218.04 h1.3 M953.5 209.77 h1.3 M953.5 201.50 h1.3 M953.5 193.23 h1.3 M953.5 184.96 h1.3 M953.5 176.69 h1.3 M953.5 168.41 h1.3 M953.5 160.14 h1.3 M953.5 151.87 h1.3 M953.5 143.60 h1.3 " stroke="#000" stroke-width="0.4"/>
<g font-size="4.45" fill="#000" font-family="DejaVu Sans, sans-serif"><text x="955.9" y="261.05">0.00</text><text x="955.9" y="252.78">0.05</text><text x="955.9" y="244.51">0.10</text><text x="955.9" y="236.24">0.15</text><text x="955.9" y="227.96">0.20</text><text x="955.9" y="219.69">0.26</text><text x="955.9" y="211.42">0.31</text><text x="955.9" y="203.15">0.36</text><text x="955.9" y="194.88">0.41</text><text x="955.9" y="186.61">0.46</text><text x="955.9" y="178.34">0.51</text><text x="955.9" y="170.06">0.56</text><text x="955.9" y="161.79">0.61</text><text x="955.9" y="153.52">0.66</text><text x="955.9" y="145.25">0.72</text></g>
<text transform="translate(970.7 201.6) rotate(-90)" text-anchor="middle" font-size="4.45" fill="#000" font-family="DejaVu Sans, sans-serif">Von Mises Stress (ksi)</text>
</svg>
<svg class="abs" style="left:0;top:0" width="200.8" height="14" viewBox="788 111 200.8 14"><path d="M796.2 116.6 h3.8 v4.6 h-3.8 Z" stroke="#444" stroke-width="0.6" fill="none"/><path d="M795 119.6 v-3.8 l1 -1 h2.8 v1.2" stroke="#444" stroke-width="0.6" fill="none"/><path d="M808.6 121.4 L813.6 116.4" stroke="#333" stroke-width="0.8"/><path d="M811.2 115.9 h2.9 v2.9 Z M808.1 119 v2.9 h2.9 Z" fill="#333"/><path d="M976.2 117.9 h3.8 l-1.9 2 Z" fill="#333"/></svg>
<div class="abs" style="right:15.6px;top:3.3px;font-size:7.3px;line-height:9px;color:#333;white-space:nowrap">Results Render: <b>Von Mises</b></div>
</div>
<table><colgroup><col style="width:80.6px"><col style="width:24.6px"><col style="width:46.1px"><col></colgroup><tr><th colspan="2">Result</th><th class="bl mn">Min (ksi)</th><th class="bl mx">Max (ksi)</th></tr><tr><td class="c" colspan="4">Primary Stresses</td></tr><tr><td class="s" colspan="4">Normal Stress</td></tr><tr><td class="r">Axial</td><td class="ic bl"><span class="inf">i</span></td><td class="bl mn">0</td><td class="bl mx">0</td></tr><tr><td class="r">Bending Y</td><td class="ic bl"><span class="inf">i</span></td><td class="bl mn">-0.308</td><td class="bl mx">0.308</td></tr><tr><td class="r">Bending Z</td><td class="ic bl"><span class="inf">i</span></td><td class="bl mn">-0.407</td><td class="bl mx">0.43</td></tr><tr><td class="s" colspan="4">Shear Stress</td></tr><tr><td class="r">Resultant Shear Y</td><td class="ic bl"><span class="inf">i</span></td><td class="bl mn">0</td><td class="bl mx">0</td></tr><tr><td class="r">Resultant Shear Z</td><td class="ic bl"><span class="inf">i</span></td><td class="bl mn">0</td><td class="bl mx">0</td></tr><tr><td class="r">Torsion</td><td class="ic bl"><span class="inf">i</span></td><td class="bl mn">0</td><td class="bl mx">0</td></tr><tr><td class="c" colspan="4">Combined Stresses</td></tr><tr><td class="r">Normal</td><td class="ic bl"><span class="inf">i</span></td><td class="bl mn">-0.715</td><td class="bl mx">0.708</td></tr><tr><td class="r">Shear</td><td class="ic bl"><span class="inf">i</span></td><td class="bl mn">0</td><td class="bl mx">0</td></tr><tr><td class="r">Von Mises</td><td class="ic bl"><span class="inf">i</span></td><td class="bl mn">0.001</td><td class="bl mx">0.715</td></tr></table>
</div><!--/RT-->
</body></html>
